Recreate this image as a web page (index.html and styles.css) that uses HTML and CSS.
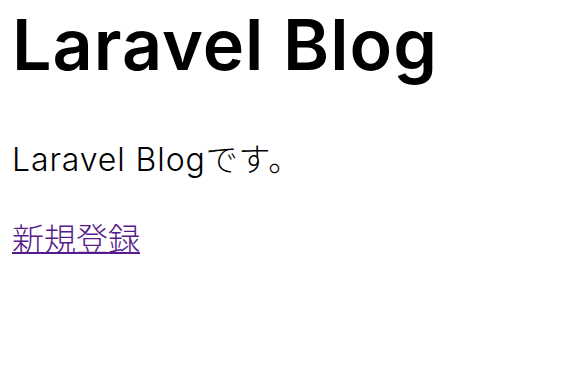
FILE: index.html
```html
<!DOCTYPE html>
<html lang="ja">
<head>
<meta charset="utf-8">
<title>Laravel Blog</title>
<link rel="stylesheet" href="styles.css">
</head>
<body>
<main class="page">
  <h1 class="title">Laravel Blog</h1>
  <p class="lead">Laravel Blogです。</p>
  <p class="actions"><a class="link" href="#">新規登録</a></p>
</main>
</body>
</html>
```
FILE: styles.css
```css
html, body {
  margin: 0;
  padding: 0;
  background: #ffffff;
}

body {
  font-family: Inter, "Noto Sans CJK JP", sans-serif;
  color: #000000;
}

.page {
  padding: 3px 12px 0;
}

.title {
  margin: 0;
  font-size: 70px;
  line-height: 84px;
  font-weight: 600;
  letter-spacing: 1px;
}

.lead {
  margin: 53px 0 0;
  font-size: 32px;
  line-height: 40px;
  font-weight: 300;
  letter-spacing: 0.9px;
}

.actions {
  margin: 40px 0 0;
  font-size: 32px;
  line-height: 40px;
  font-weight: 300;
}

.link {
  color: #551a8b;
  text-decoration: underline;
  text-decoration-thickness: 2px;
}
```
